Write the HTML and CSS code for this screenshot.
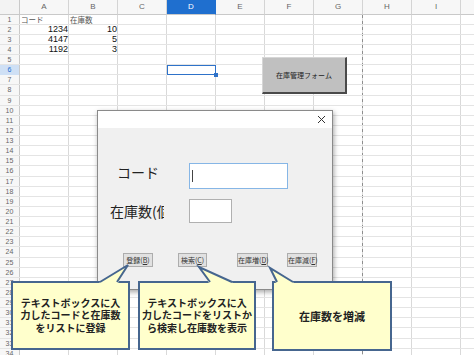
FILE: index.html
```html
<!DOCTYPE html>
<html lang="ja">
<head>
<meta charset="utf-8">
<link rel="stylesheet" href="styles.css">
</head>
<body>
<div class="app">
  <div class="hdr">
    <div class="corner"></div>
    <div class="ch">A</div><div class="ch">B</div><div class="ch">C</div><div class="ch on">D</div><div class="ch">E</div>
    <div class="ch">F</div><div class="ch">G</div><div class="ch">H</div><div class="ch">I</div><div class="ch">J</div>
  </div>
  <div class="grid">
    <div class="row"><div class="rh">1</div><div class="c txt">コード</div><div class="c txt">在庫数</div></div>
    <div class="row"><div class="rh">2</div><div class="c num">1234</div><div class="c num">10</div></div>
    <div class="row"><div class="rh">3</div><div class="c num">4147</div><div class="c num">5</div></div>
    <div class="row"><div class="rh">4</div><div class="c num">1192</div><div class="c num">3</div></div>
    <div class="row"><div class="rh">5</div></div>
    <div class="row sel"><div class="rh">6</div><div class="cur"></div></div>
    <div class="row"><div class="rh">7</div></div>
    <div class="row"><div class="rh">8</div></div>
    <div class="row"><div class="rh">9</div></div>
    <div class="row"><div class="rh">10</div></div>
    <div class="row"><div class="rh">11</div></div>
    <div class="row"><div class="rh">12</div></div>
    <div class="row"><div class="rh">13</div></div>
    <div class="row"><div class="rh">14</div></div>
    <div class="row"><div class="rh">15</div></div>
    <div class="row"><div class="rh">16</div></div>
    <div class="row"><div class="rh">17</div></div>
    <div class="row"><div class="rh">18</div></div>
    <div class="row"><div class="rh">19</div></div>
    <div class="row"><div class="rh">20</div></div>
    <div class="row"><div class="rh">21</div></div>
    <div class="row"><div class="rh">22</div></div>
    <div class="row"><div class="rh">23</div></div>
    <div class="row"><div class="rh">24</div></div>
    <div class="row"><div class="rh">25</div></div>
    <div class="row"><div class="rh">26</div></div>
    <div class="row"><div class="rh">27</div></div>
    <div class="row"><div class="rh">28</div></div>
    <div class="row"><div class="rh">29</div></div>
    <div class="row"><div class="rh">30</div></div>
    <div class="row"><div class="rh">31</div></div>
    <div class="row"><div class="rh">32</div></div>
    <div class="row"><div class="rh">33</div></div>
    <div class="row"><div class="rh">34</div></div>
  </div>

  <div class="macro">在庫管理フォーム</div>

  <div class="dialog">
    <div class="titlebar">
      <svg class="close" width="9" height="9" viewBox="0 0 9 9"><path d="M1 1 L8 8 M8 1 L1 8" stroke="#333" stroke-width="1" fill="none"/></svg>
    </div>
    <div class="dbody">
      <div class="frow r1">
        <div class="lbl code">コード</div>
        <div class="tb tb1"><span class="caret"></span></div>
      </div>
      <div class="frow r2">
        <div class="lbl"><span class="clip">在庫数(個)</span></div>
        <div class="tb tb2"></div>
      </div>
      <div class="btns">
        <div class="btn b1">登録(<u>B</u>)</div>
        <div class="btn b2">検索(<u>C</u>)</div>
        <div class="btn b3">在庫増(<u>D</u>)</div>
        <div class="btn b4">在庫減(<u>F</u>)</div>
      </div>
    </div>
  </div>

  <div class="callout c1">
    <svg class="tail" width="130" height="24" viewBox="0 0 130 24"><polygon points="88,22 117,4 107,22" fill="#ffffcc"/><polyline points="89,21 117,4 106,21" fill="none" stroke="#46668f" stroke-width="2"/></svg>
    <p>テキストボックスに入<br>力したコードと在庫数<br>をリストに登録</p>
  </div>
  <div class="callout c2">
    <svg class="tail" width="130" height="24" viewBox="0 0 130 24"><polygon points="71,22 61,6 95,22" fill="#ffffcc"/><polyline points="72,21 61,6 94,21" fill="none" stroke="#46668f" stroke-width="2"/></svg>
    <p>テキストボックスに入<br>力したコードをリストか<br>ら検索し在庫数を表示</p>
  </div>
  <div class="callout c3">
    <svg class="tail" width="130" height="24" viewBox="-4 0 130 24"><polygon points="4,22 -2,7 22,22" fill="#ffffcc"/><polyline points="5,21 -2,7 21,21" fill="none" stroke="#46668f" stroke-width="2"/></svg>
    <p>在庫数を増減</p>
  </div>
</div>
</body>
</html>
```

FILE: styles.css
```css
* { box-sizing: border-box; margin: 0; padding: 0; }
body {
  margin: 0;
  width: 474px;
  height: 355px;
  overflow: hidden;
  background: #fff;
  font-family: "Liberation Sans", "Noto Sans CJK JP", sans-serif;
}
.app {
  position: relative;
  width: 474px;
  height: 355px;
  overflow: hidden;
}
.hdr {
  display: grid;
  grid-template-columns: 20px repeat(10, 49px);
  height: 15px;
}
.corner {
  background: #f3f3f3;
  border-right: 1px solid #c9c9c9;
  border-bottom: 1px solid #c9c9c9;
}
.ch {
  background: #f7f7f7;
  border-right: 1px solid #d4d4d4;
  border-bottom: 1px solid #c9c9c9;
  font-size: 8px;
  color: #666;
  text-align: center;
  line-height: 14px;
}
.ch.on {
  background: #1f6fcf;
  color: #fff;
  border-right-color: #1f6fcf;
}
.grid {
  background:
    linear-gradient(#8e8e8e 0 3px, transparent 3px 6px) 362px 0 / 1px 6px repeat-y,
    linear-gradient(to right, transparent 48px, #d9d9d9 48px) 20px 0 / 49px 100% repeat-x,
    #fff;
}
.row {
  display: grid;
  grid-template-columns: 20px repeat(10, 49px);
  height: 10px;
  border-bottom: 1px solid #e4e4e4;
}
.row:nth-child(8n) { height: 11px; }
.rh {
  background: #f7f7f7;
  border-right: 1px solid #c9c9c9;
  font-size: 7px;
  line-height: 9px;
  color: #666;
  text-align: center;
}
.row.sel .rh {
  background: #cfe0f5;
  color: #1f6fcf;
}
.c {
  font-size: 8px;
  line-height: 9px;
  white-space: nowrap;
  padding: 0 2px;
}
.txt {
  color: #555;
  font-family: "Noto Sans CJK JP", sans-serif;
  font-size: 7.5px;
  padding-left: 1px;
}
.num {
  text-align: right;
  color: #111;
  font-size: 9px;
  padding-right: 1px;
}
.cur {
  grid-column: 5;
  align-self: start;
  height: 10px;
  border: 1px solid #2e72c9;
  position: relative;
}
.cur::after {
  content: "";
  position: absolute;
  right: -3px;
  bottom: -3px;
  width: 4px;
  height: 4px;
  background: #2e72c9;
}

.macro {
  position: absolute;
  left: 262px;
  top: 57px;
  width: 85px;
  height: 37px;
  background: #c0c0c0;
  border-top: 1px solid #d6d6d6;
  border-left: 1px solid #d6d6d6;
  border-right: 2px solid #4a4a4a;
  border-bottom: 2px solid #4a4a4a;
  font-family: "Noto Sans CJK JP", sans-serif;
  font-size: 7px;
  color: #222;
  display: flex;
  align-items: center;
  justify-content: center;
}

.dialog {
  position: absolute;
  left: 97px;
  top: 110px;
  width: 236px;
  height: 180px;
  border: 1px solid #8a8a8a;
  box-shadow: 1px 2px 5px rgba(0, 0, 0, 0.35);
  background: #f0f0f0;
  display: flex;
  flex-direction: column;
  font-family: "Noto Sans CJK JP", sans-serif;
}
.titlebar {
  height: 17px;
  background: #fff;
  display: flex;
  justify-content: flex-end;
  align-items: center;
  padding-right: 6px;
}
.dbody {
  flex: 1;
  padding: 35px 0 0 12px;
}
.frow {
  display: flex;
  align-items: center;
}
.r1 { height: 26px; align-items: flex-start; }
.r2 { height: 24px; margin-top: 10px; }
.lbl {
  width: 79px;
  font-size: 14px;
  line-height: 18px;
  color: #222;
  white-space: nowrap;
}
.lbl.code { padding-left: 7px; }
.clip {
  display: block;
  width: 54px;
  overflow: hidden;
}
.tb {
  background: #fff;
  border: 1px solid #b0b0b0;
}
.tb1 {
  width: 99px;
  height: 26px;
  border-color: #86b6e6;
}
.caret {
  display: block;
  width: 1px;
  height: 12px;
  margin: 6px 0 0 2px;
  background: #444;
}
.tb2 {
  width: 43px;
  height: 24px;
}
.btns {
  display: flex;
  margin-top: 30px;
  padding-left: 13px;
}
.btn {
  height: 14px;
  font-size: 7px;
  line-height: 12px;
  background: #e1e1e1;
  border: 1px solid #adadad;
  color: #333;
  text-align: center;
  white-space: nowrap;
}
.b1 { width: 30px; }
.b2 { width: 29px; margin-left: 25px; }
.b3 { width: 31px; margin-left: 30px; }
.b4 { width: 30px; margin-left: 19px; }

.callout {
  position: absolute;
  top: 281px;
  height: 69px;
  background: #ffffcc;
  border: 2px solid #46668f;
  display: flex;
  align-items: center;
  justify-content: center;
  text-align: center;
  font-family: "Noto Sans CJK JP", sans-serif;
  font-weight: 700;
  font-size: 10px;
  line-height: 12.5px;
  color: #222;
}
.c1 { left: 11px; width: 119px; }
.c2 { left: 138px; width: 118px; }
.c3 { left: 272px; width: 120px; height: 70px; font-size: 11px; }
.tail {
  position: absolute;
  left: -2px;
  top: -22px;
  overflow: visible;
}
.c3 .tail { left: -6px; }
```
